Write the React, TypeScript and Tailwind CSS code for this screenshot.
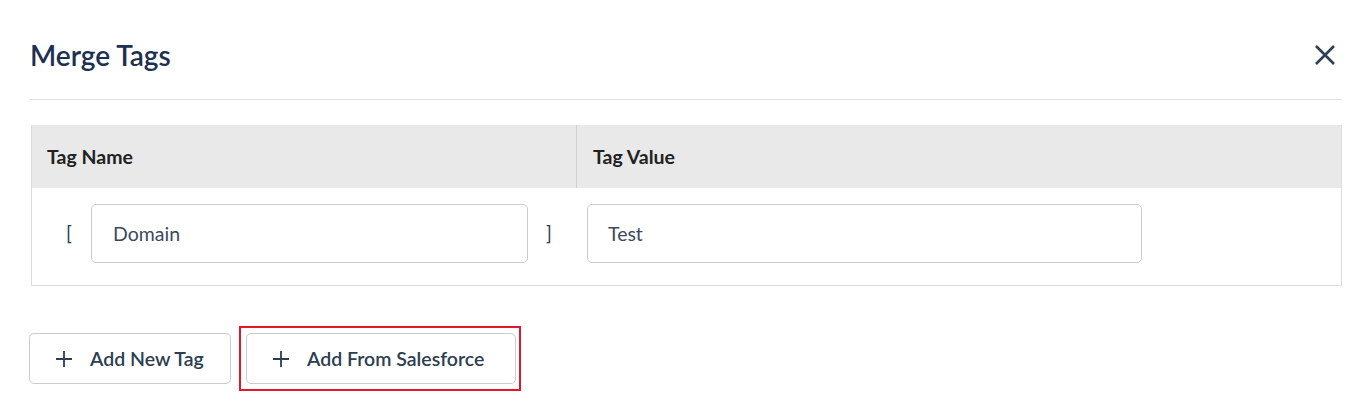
import React from 'react';

function PlusIcon() {
    return (
        <svg width="18" height="18" viewBox="0 0 18 18" className="shrink-0">
            <path d="M9 1v16M1 9h16" stroke="#2c3e50" strokeWidth="1.8" fill="none" />
        </svg>
    );
}

export default function App() {
    return (
        <div className="w-[1367px] h-[407px] bg-white font-['Lato',sans-serif] text-[#2c3e50]">
            <div className="pl-[30px] pr-[25px]">
                <div className="flex items-center justify-between h-[100px] border-b border-[#e2e2e2] pt-[10px]">
                    <h1 className="text-[28px] font-semibold text-[#1c3050]">Merge Tags</h1>
                    <button className="pr-[6px]">
                        <svg width="22" height="22" viewBox="0 0 22 22">
                            <path d="M2 2l18 18M20 2L2 20" stroke="#2c4156" strokeWidth="2.6" fill="none" />
                        </svg>
                    </button>
                </div>
            </div>

            <div className="ml-[31px] mr-[25px] mt-[25px] border-x border-b border-[#dddddd]">
                <div className="flex h-[63px] bg-[#e9e9e9] text-[19.5px] font-bold text-[#222]">
                    <div className="w-[545px] flex items-center pl-[15px] border-r border-[#cfcfcf]">Tag Name</div>
                    <div className="flex items-center pl-[16px]">Tag Value</div>
                </div>
                <div className="flex items-start h-[97px] pt-[16px]">
                    <span className="w-[59px] h-[59px] flex items-center pl-[34px] text-[19px]">[</span>
                    <div className="w-[437px] h-[59px] border border-[#cccccc] rounded-[5px] flex items-center pl-[21px] text-[19.5px] text-[#3b4a5c]">
                        Domain
                    </div>
                    <span className="w-[59px] h-[59px] flex items-center pl-[18px] text-[19px]">]</span>
                    <div className="w-[555px] h-[59px] border border-[#cccccc] rounded-[5px] flex items-center pl-[20px] text-[19.5px] text-[#3b4a5c]">
                        Test
                    </div>
                </div>
            </div>

            <div className="flex items-center gap-[8px] pl-[29px] mt-[40px]">
                <button className="h-[51px] w-[202px] border border-[#cccccc] rounded-[5px] flex items-center pl-[25px] gap-[17px] text-[19.5px] font-semibold">
                    <PlusIcon />
                    Add New Tag
                </button>
                <div className="border-2 border-[#e3192b] pl-[5px] pr-[3px] py-[5px]">
                    <button className="h-[51px] w-[270px] border border-[#cccccc] rounded-[5px] flex items-center pl-[25px] gap-[17px] text-[19.5px] font-semibold">
                        <PlusIcon />
                        Add From Salesforce
                    </button>
                </div>
            </div>
        </div>
    );
}
